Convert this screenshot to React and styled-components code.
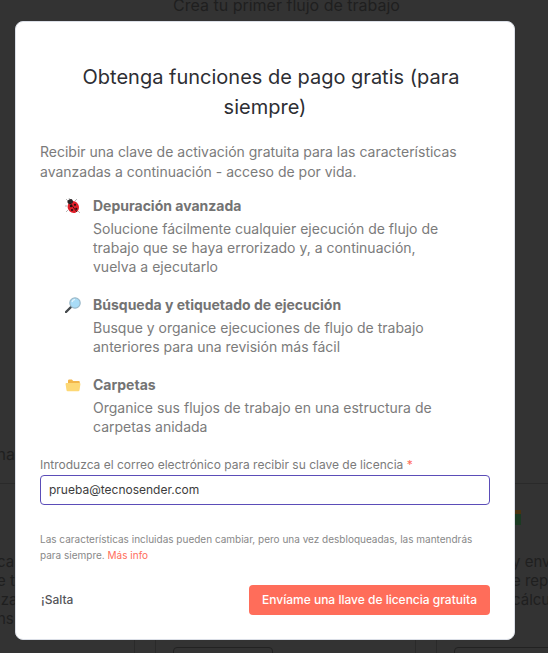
import React from "react";
import styled, { createGlobalStyle } from "styled-components";

const Global = createGlobalStyle`
  html, body { margin: 0; padding: 0; height: 100%; background: #333333; overflow: hidden; }
  * { box-sizing: border-box; }
  body { font-family: Inter, "Liberation Sans", sans-serif; }
`;

const Page = styled.div`
  width: 548px;
  height: 653px;
  overflow: hidden;
  background: #333333;
  color: #1d1d1d;
  position: relative;
`;
const PageTitle = styled.h2`
  margin: 0;
  height: 11px;
  line-height: 11px;
  font-size: 16px;
  font-weight: 400;
  text-align: center;
  color: #1f1f1f;
  padding-left: 25px;
`;
const Section = styled.div`
  margin-top: 430px;
  height: 43px;
  padding-top: 1px;
  font-size: 16px;
  line-height: 24px;
  white-space: nowrap;
  border-bottom: 1px solid #2a2a2a;
  direction: rtl;
  padding-right: 533px;
  color: #1f1f1f;
`;
const Cards = styled.div`
  display: grid;
  grid-template-columns: 261px 261px 261px;
  gap: 20px;
  margin-left: -126px;
  width: 830px;
  height: 169px;
`;
const Card = styled.div`
  border-left: 1px solid #2a2a2a;
  border-right: 1px solid #2a2a2a;
  padding: 68px 0 0 ${(p) => p.$pad}px;
  height: 169px;
  font-size: 15px;
  line-height: 19px;
  white-space: nowrap;
  overflow: hidden;
  color: #1f1f1f;
  position: relative;
`;
const CardLine = styled.div``;
const CardTag = styled.span`
  position: absolute;
  left: 78px;
  top: 26px;
  width: 6px;
  height: 15px;
  background: linear-gradient(#4a3310 0 30%, #1b3a22 30%);
`;
const CardButton = styled.div`
  position: absolute;
  left: 17px;
  top: 163px;
  width: 100px;
  height: 30px;
  border: 1px solid #222222;
  border-radius: 4px;
`;

const Modal = styled.div`
  position: absolute;
  left: 15px;
  top: 21px;
  width: 500px;
  height: 619px;
  background: #ffffff;
  border-radius: 8px;
  border: 1px solid #dbdfe7;
  padding: 40px 24px 0;
  display: flex;
  flex-direction: column;
`;
const Title = styled.h1`
  margin: 0;
  font-size: 20px;
  font-weight: 400;
  line-height: 30px;
  text-align: center;
  text-indent: 12px;
  color: #2d2e33;
`;
const Intro = styled.p`
  margin: 20px 0 0;
  font-size: 14px;
  line-height: 19.6px;
  color: #7b7b7b;
`;
const Features = styled.ul`
  list-style: none;
  margin: 14.5px 0 0;
  padding: 0 42px 0 25px;
`;
const Feature = styled.li`
  display: flex;
  gap: 12px;
  margin-bottom: 19.2px;
  &:last-child { margin-bottom: 0; }
`;
const FeatureIcon = styled.svg`
  width: 16px;
  height: 16px;
  flex: none;
  margin-top: 2px;
`;
const FeatureBody = styled.div`
  flex: 1;
  font-size: 14px;
  line-height: 19px;
  color: #7b7b7b;
`;
const FeatureName = styled.div`
  font-weight: 700;
  color: #737373;
  margin-bottom: 4px;
`;
const Field = styled.label`
  display: block;
  margin-top: 20.8px;
`;
const FieldLabel = styled.span`
  display: block;
  font-size: 12px;
  line-height: 16px;
  color: #7b7b7b;
  margin-bottom: 2px;
`;
const Required = styled.span`
  color: #ff6d5a;
`;
const Input = styled.input`
  display: block;
  width: 100%;
  height: 30px;
  padding: 0 8px;
  border: 1px solid #5b4db8;
  border-radius: 4px;
  outline: none;
  font: 400 12px Inter, "Liberation Sans", sans-serif;
  color: #3c3c3c;
  background: #fff;
`;
const Note = styled.p`
  margin: 26px 0 0;
  font-size: 10px;
  line-height: 16px;
  color: #888888;
`;
const NoteLink = styled.a`
  color: #ff6d5a;
  text-decoration: none;
`;
const Footer = styled.div`
  margin-top: 22px;
  display: flex;
  justify-content: space-between;
  align-items: center;
`;
const Skip = styled.button`
  border: 0;
  background: none;
  padding: 0 1px;
  font: 500 12px Inter, "Liberation Sans", sans-serif;
  color: #55555a;
`;
const Send = styled.button`
  width: 241px;
  height: 30px;
  border: 0;
  border-radius: 4px;
  background: #ff6d5a;
  color: #fff;
  font: 500 12px Inter, "Liberation Sans", sans-serif;
  padding: 0;
`;

const Ladybug = () => (
  <FeatureIcon viewBox="0 0 16 16">
    <path d="M3 3 1 1M5 2 4 0M10 3l2-2M2 8H0M3 12l-2 2M13 13l2 2" stroke="#9a9a9a" strokeWidth=".7" fill="none" />
    <ellipse cx="8.3" cy="9" rx="5.6" ry="6" fill="#e0202a" transform="rotate(-25 8.3 9)" />
    <ellipse cx="5.2" cy="3.6" rx="2.8" ry="2.4" fill="#2a2526" transform="rotate(-25 5.2 3.6)" />
    <path d="M5 5l7 9" stroke="#2a1212" strokeWidth=".8" />
    <circle cx="6" cy="8" r="1.2" fill="#2a1212" />
    <circle cx="10" cy="6.8" r="1.1" fill="#2a1212" />
    <circle cx="7" cy="12" r="1.1" fill="#2a1212" />
    <circle cx="11.3" cy="10.8" r="1.1" fill="#2a1212" />
  </FeatureIcon>
);
const Magnifier = () => (
  <FeatureIcon viewBox="0 0 16 16">
    <path d="M6 10 1 15" stroke="#45494d" strokeWidth="2.4" strokeLinecap="round" />
    <circle cx="10" cy="6" r="5.2" fill="#a9dcf7" stroke="#9bb8c8" strokeWidth="1.2" />
    <path d="M7 5a3.4 3.4 0 0 1 3-2.6" stroke="#e4f5fd" strokeWidth="1.2" fill="none" />
  </FeatureIcon>
);
const Folder = () => (
  <FeatureIcon viewBox="0 0 16 16">
    <path d="M3 4C3 3 3.5 2.5 4.3 2.5h2.6l1.3 1.5h5.4c.8 0 1.2.5 1.2 1.2V7H3z" fill="#f2b64a" />
    <path d="M.6 7.2c-.1-.7.3-1.2 1-1.2h12.8c.7 0 1.1.5 1 1.2l-.9 6c-.1.7-.5 1-1.2 1H2.7c-.7 0-1.1-.3-1.2-1z" fill="#fdd875" />
  </FeatureIcon>
);

export default function App() {
  return (
    <Page>
      <Global />
      <PageTitle>Crea tu primer flujo de trabajo</PageTitle>
      <Section>na</Section>
      <Cards>
        <Card $pad={122}>
          <CardLine>car</CardLine>
          <CardLine>e ti</CardLine>
          <CardLine>iza</CardLine>
          <CardLine>ns</CardLine>
        </Card>
        <Card $pad={17}>
          <CardButton />
        </Card>
        <Card $pad={75}>
          <CardTag />
          <CardLine>y envía</CardLine>
          <CardLine>e repite</CardLine>
          <CardLine>cálculo</CardLine>
          <CardButton />
        </Card>
      </Cards>
      <Modal>
        <Title>
          Obtenga funciones de pago gratis (para
          <br />
          siempre)
        </Title>
        <Intro>
          Recibir una clave de activación gratuita para las características avanzadas a continuación - acceso de por vida.
        </Intro>
        <Features>
          <Feature>
            <Ladybug />
            <FeatureBody>
              <FeatureName>Depuración avanzada</FeatureName>
              Solucione fácilmente cualquier ejecución de flujo de trabajo que se haya errorizado y, a continuación, vuelva a ejecutarlo
            </FeatureBody>
          </Feature>
          <Feature>
            <Magnifier />
            <FeatureBody>
              <FeatureName>Búsqueda y etiquetado de ejecución</FeatureName>
              Busque y organice ejecuciones de flujo de trabajo anteriores para una revisión más fácil
            </FeatureBody>
          </Feature>
          <Feature>
            <Folder />
            <FeatureBody>
              <FeatureName>Carpetas</FeatureName>
              Organice sus flujos de trabajo en una estructura de carpetas anidada
            </FeatureBody>
          </Feature>
        </Features>
        <Field>
          <FieldLabel>
            Introduzca el correo electrónico para recibir su clave de licencia <Required>*</Required>
          </FieldLabel>
          <Input defaultValue="prueba@tecnosender.com" />
        </Field>
        <Note>
          Las características incluidas pueden cambiar, pero una vez desbloqueadas, las mantendrás para siempre.{" "}
          <NoteLink href="#">Más info</NoteLink>
        </Note>
        <Footer>
          <Skip>¡Salta</Skip>
          <Send>Envíame una llave de licencia gratuita</Send>
        </Footer>
      </Modal>
    </Page>
  );
}
